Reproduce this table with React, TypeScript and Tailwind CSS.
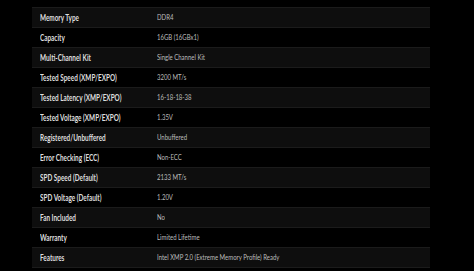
const specs: [string, string][] = [
  ["Memory Type", "DDR4"],
  ["Capacity", "16GB (16GBx1)"],
  ["Multi-Channel Kit", "Single Channel Kit"],
  ["Tested Speed (XMP/EXPO)", "3200 MT/s"],
  ["Tested Latency (XMP/EXPO)", "16-18-18-38"],
  ["Tested Voltage (XMP/EXPO)", "1.35V"],
  ["Registered/Unbuffered", "Unbuffered"],
  ["Error Checking (ECC)", "Non-ECC"],
  ["SPD Speed (Default)", "2133 MT/s"],
  ["SPD Voltage (Default)", "1.20V"],
  ["Fan Included", "No"],
  ["Warranty", "Limited Lifetime"],
  ["Features", "Intel XMP 2.0 (Extreme Memory Profile) Ready"],
];

export default function App() {
  return (
    <div className="w-[474px] h-[271px] bg-black overflow-hidden pt-[7px] pl-[32px]" style={{ fontFamily: "Lato, 'Open Sans', sans-serif" }}>
      <div className="w-[398px] border-t border-[#1b1b1b]">
        {specs.map(([label, value], i) => (
          <div
            key={label}
            className={`flex items-center h-[20px] border-b border-[#1b1b1b] ${i % 2 === 0 ? "bg-[#0e0e0e]" : "bg-black"}`}
          >
            <div className="flex items-center w-[125px] pl-[8px] whitespace-nowrap leading-none">
              <span className="inline-block origin-left scale-x-[0.71] text-[9px] leading-none font-bold text-[#dedede]">{label}</span>
            </div>
            <div className="flex items-center whitespace-nowrap leading-none">
              <span className="inline-block origin-left scale-x-[0.8] text-[7.5px] leading-none text-[#bdbdbd]">{value}</span>
            </div>
          </div>
        ))}
      </div>
    </div>
  );
}
